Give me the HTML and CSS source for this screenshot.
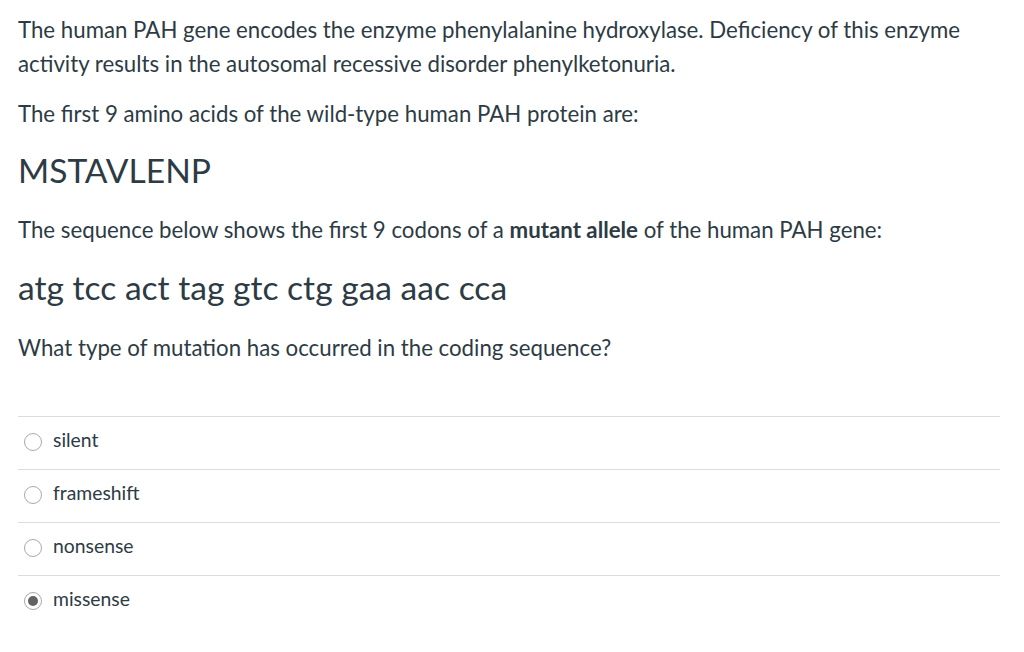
FILE: index.html
```html
<!DOCTYPE html>
<html>
<head>
<meta charset="utf-8">
<link rel="stylesheet" href="styles.css">
</head>
<body>
<div class="question">
  <p class="text">The human PAH gene encodes the enzyme phenylalanine hydroxylase. Deficiency of this enzyme activity results in the autosomal recessive disorder phenylketonuria.</p>
  <p class="text gap">The first 9 amino acids of the wild-type human PAH protein are:</p>
  <p class="big seq1">MSTAVLENP</p>
  <p class="text seq2">The sequence below shows the first 9 codons of a <strong>mutant allele</strong> of the human PAH gene:</p>
  <p class="big seq3">atg tcc act tag gtc ctg gaa aac cca</p>
  <p class="text seq4">What type of mutation has occurred in the coding sequence?</p>
  <div class="answers">
    <label class="answer"><span class="radio"></span><span class="label">silent</span></label>
    <label class="answer"><span class="radio"></span><span class="label">frameshift</span></label>
    <label class="answer"><span class="radio"></span><span class="label">nonsense</span></label>
    <label class="answer last"><span class="radio checked"></span><span class="label">missense</span></label>
  </div>
</div>
</body>
</html>
```
FILE: styles.css
```css
html, body {
  margin: 0;
  padding: 0;
  background: #ffffff;
}
body {
  font-family: Lato, "Open Sans", sans-serif;
  color: #2d3b45;
}
.question {
  padding: 13px 24px 0 18px;
}
p {
  margin: 0;
}
.text {
  font-size: 22.25px;
  line-height: 34px;
}
.gap {
  margin-top: 16px;
}
.big {
  font-size: 33.6px;
  line-height: 50px;
}
.seq1 { margin-top: 13.6px; }
.seq2 { margin-top: 18.4px; }
.seq3 { margin-top: 14.6px; }
.seq4 { margin-top: 19.4px; }
strong {
  font-weight: 700;
}
.answers {
  margin-top: 50.6px;
  border-top: 1px solid #dcdcdc;
}
.answer {
  display: flex;
  align-items: center;
  height: 52px;
  border-bottom: 1px solid #dcdcdc;
  font-size: 19.35px;
}
.answer.last {
  border-bottom: none;
}
.radio {
  width: 16px;
  height: 16px;
  border: 1px solid #a9a9a9;
  border-radius: 50%;
  margin-left: 6px;
  margin-right: 11px;
  box-sizing: content-box;
  display: flex;
  align-items: center;
  justify-content: center;
  position: relative;
  top: -1px;
}
.radio.checked::after {
  content: "";
  width: 10px;
  height: 10px;
  border-radius: 50%;
  background: #636363;
}
.label {
  position: relative;
  top: -3px;
}
```
